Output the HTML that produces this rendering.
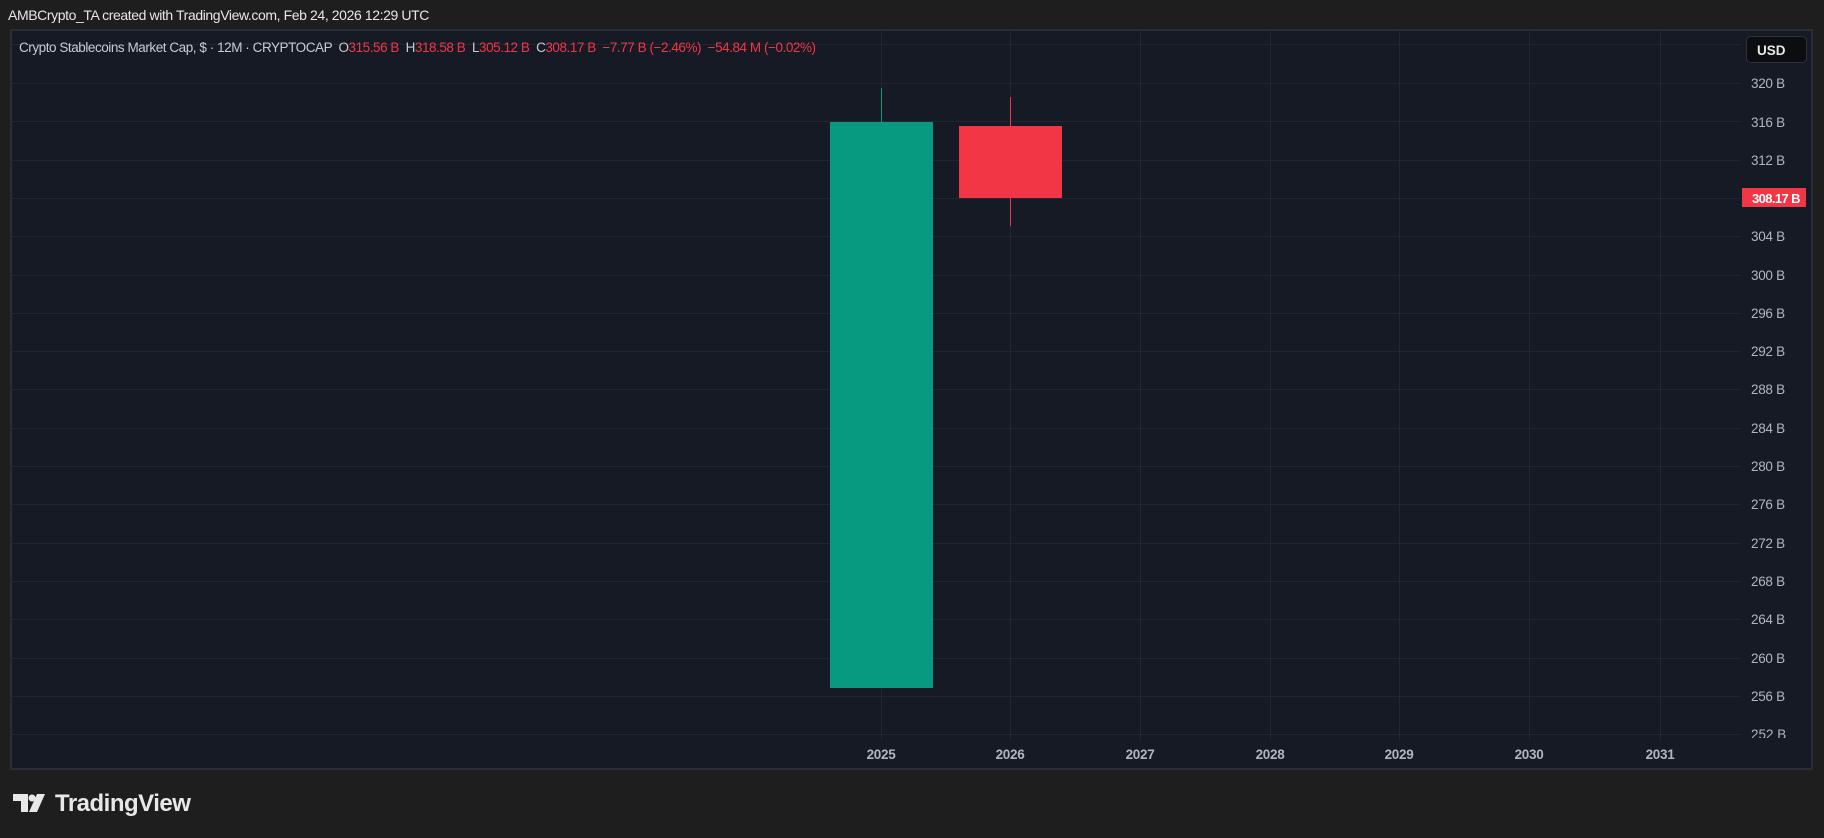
<!DOCTYPE html>
<html><head><meta charset="utf-8"><style>
*{margin:0;padding:0;box-sizing:border-box}
body{width:1824px;height:838px;background:#1e1e1e;font-family:"Liberation Sans",sans-serif;position:relative;overflow:hidden}
.hdr{position:absolute;left:8px;top:7px;color:#e6e6e6;font-size:14px;letter-spacing:-0.4px}
.panel{position:absolute;left:10px;top:29px;width:1803px;height:741px;background:#161a25;border:2px solid #2a2d35}
svg{position:absolute;left:0;top:0}
.leg{position:absolute;left:19px;top:40px;font-size:13.5px;color:#c8cbd2;letter-spacing:-0.45px;white-space:pre}
.r{color:#f23645}
.usd{position:absolute;left:1746px;top:36px;width:61px;height:27px;background:#0c0d10;border:1px solid #2e3038;border-radius:5px;color:#e8e8e8;font-size:13.5px;font-weight:bold;padding:6px 0 0 10px}
.logo{position:absolute;left:55px;top:790px;color:#e8e8e8;font-size:24px;font-weight:bold;letter-spacing:-0.5px}
</style></head><body>
<div class="hdr">AMBCrypto_TA created with TradingView.com, Feb 24, 2026 12:29 UTC</div>
<div class="panel"></div>
<svg width="1824" height="838" xmlns="http://www.w3.org/2000/svg">
<g stroke="#222633" stroke-width="1">
<line x1="12" y1="44.5" x2="1741" y2="44.5"/>
<line x1="12" y1="83.5" x2="1741" y2="83.5"/><line x1="12" y1="121.5" x2="1741" y2="121.5"/><line x1="12" y1="160.5" x2="1741" y2="160.5"/><line x1="12" y1="198.5" x2="1741" y2="198.5"/><line x1="12" y1="236.5" x2="1741" y2="236.5"/><line x1="12" y1="275.5" x2="1741" y2="275.5"/><line x1="12" y1="313.5" x2="1741" y2="313.5"/><line x1="12" y1="351.5" x2="1741" y2="351.5"/><line x1="12" y1="389.5" x2="1741" y2="389.5"/><line x1="12" y1="428.5" x2="1741" y2="428.5"/><line x1="12" y1="466.5" x2="1741" y2="466.5"/><line x1="12" y1="504.5" x2="1741" y2="504.5"/><line x1="12" y1="543.5" x2="1741" y2="543.5"/><line x1="12" y1="581.5" x2="1741" y2="581.5"/><line x1="12" y1="619.5" x2="1741" y2="619.5"/><line x1="12" y1="658.5" x2="1741" y2="658.5"/><line x1="12" y1="696.5" x2="1741" y2="696.5"/><line x1="12" y1="734.5" x2="1741" y2="734.5"/>
<line x1="881.5" y1="31" x2="881.5" y2="740"/><line x1="1010.5" y1="31" x2="1010.5" y2="740"/><line x1="1140.5" y1="31" x2="1140.5" y2="740"/><line x1="1270.5" y1="31" x2="1270.5" y2="740"/><line x1="1399.5" y1="31" x2="1399.5" y2="740"/><line x1="1529.5" y1="31" x2="1529.5" y2="740"/><line x1="1660.5" y1="31" x2="1660.5" y2="740"/>
</g>
<line x1="881.5" y1="88" x2="881.5" y2="122" stroke="#089981"/>
<rect x="830" y="122" width="103" height="566" fill="#089981"/>
<line x1="1010.5" y1="97" x2="1010.5" y2="226" stroke="#f23645"/>
<rect x="959" y="126" width="103" height="72" fill="#f23645"/>
<rect x="1742" y="188" width="64" height="19" fill="#f23645"/>
<g font-family="Liberation Sans, sans-serif" font-size="13.5" fill="#b2b5be" letter-spacing="-0.3">
<text x="1751" y="88">320 B</text><text x="1751" y="127">316 B</text><text x="1751" y="165">312 B</text><text x="1751" y="241">304 B</text><text x="1751" y="280">300 B</text><text x="1751" y="318">296 B</text><text x="1751" y="356">292 B</text><text x="1751" y="394">288 B</text><text x="1751" y="433">284 B</text><text x="1751" y="471">280 B</text><text x="1751" y="509">276 B</text><text x="1751" y="548">272 B</text><text x="1751" y="586">268 B</text><text x="1751" y="624">264 B</text><text x="1751" y="663">260 B</text><text x="1751" y="701">256 B</text>
</g>
<svg x="1740" y="700" width="80" height="38"><text x="11" y="39" font-family="Liberation Sans, sans-serif" font-size="13.5" fill="#b2b5be">252 B</text></svg>
<text x="1752" y="203" font-family="Liberation Sans, sans-serif" font-size="13" font-weight="bold" fill="#ffffff" letter-spacing="-0.6">308.17 B</text>
<g font-family="Liberation Sans, sans-serif" font-size="13.5" font-weight="bold" fill="#b2b5be" text-anchor="middle" letter-spacing="-0.3">
<text x="881" y="759">2025</text><text x="1010" y="759">2026</text><text x="1140" y="759">2027</text><text x="1270" y="759">2028</text><text x="1399" y="759">2029</text><text x="1529" y="759">2030</text><text x="1660" y="759">2031</text>
</g>
<g fill="#e8e8e8">
<path d="M13 794h15v18h-7v-11h-8z"/>
<circle cx="32" cy="798" r="3.5"/>
<path d="M37 794h8l-8 18h-8z"/>
</g>
</svg>
<div class="leg">Crypto Stablecoins Market Cap, $ · 12M · CRYPTOCAP  O<span class="r">315.56 B</span>  H<span class="r">318.58 B</span>  L<span class="r">305.12 B</span>  C<span class="r">308.17 B  −7.77 B (−2.46%)  −54.84 M (−0.02%)</span></div>
<div class="usd">USD</div>
<div class="logo">TradingView</div>
</body></html>
